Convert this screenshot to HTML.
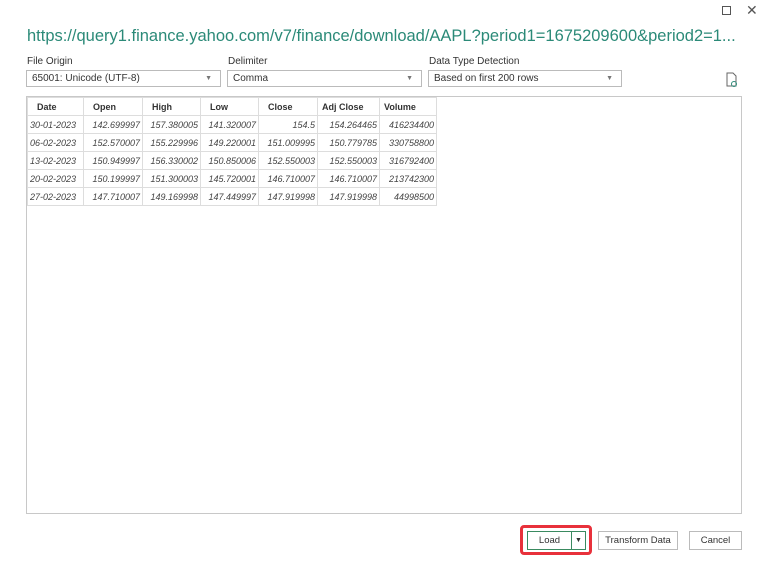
<!DOCTYPE html><html><head><style>
body{margin:0;width:768px;height:576px;background:#fff;font-family:"Liberation Sans",sans-serif;position:relative;overflow:hidden;color:#333}
.a{position:absolute}
.t{left:27px;top:26px;font-size:17px;color:#2b8a78;white-space:nowrap;transform:scaleX(0.97);transform-origin:left top}
.l{font-size:10px;color:#333}
.dd{border:1px solid #bbb;height:17px;font-size:10px;line-height:16px;padding-left:5px;box-sizing:border-box}
.dd span{position:absolute;right:8px;top:0;font-size:7px;color:#777}
.box{left:26px;top:96px;width:716px;height:418px;border:1px solid #c8c8c8;box-sizing:border-box}
table{position:absolute;left:27px;top:97px;border-collapse:collapse;font-size:9px;table-layout:fixed;width:409px}
td,th{border:1px solid #ddd;height:17px;padding:0 2px;white-space:nowrap;overflow:hidden;color:#444}
th{font-weight:bold;text-align:left;padding-left:9px;color:#333}
td{font-style:italic;text-align:right}
td:first-child{text-align:left}
.b{border:1px solid #bbb;height:19px;font-size:9.5px;line-height:17px;text-align:center;box-sizing:border-box}
</style></head><body>
<div class="a" style="left:722px;top:6px;width:9px;height:9px;border:1px solid #555;box-sizing:border-box"></div>
<div class="a" style="left:746px;top:2px;font-size:14px;color:#555">✕</div>
<div class="a t">https://query1.finance.yahoo.com/v7/finance/download/AAPL?period1=1675209600&amp;period2=1...</div>
<div class="a l" style="left:27px;top:56px">File Origin</div>
<div class="a l" style="left:228px;top:56px">Delimiter</div>
<div class="a l" style="left:429px;top:56px">Data Type Detection</div>
<div class="a dd" style="left:26px;top:70px;width:195px">65001: Unicode (UTF-8)<span>▼</span></div>
<div class="a dd" style="left:227px;top:70px;width:195px">Comma<span>▼</span></div>
<div class="a dd" style="left:428px;top:70px;width:194px">Based on first 200 rows<span>▼</span></div>
<svg class="a" style="left:726px;top:72px" width="12" height="16" viewBox="0 0 12 16"><path d="M1 1h6l3 3v10H1z" fill="none" stroke="#666"/><circle cx="8" cy="12" r="2.5" fill="none" stroke="#2b8a78"/></svg>
<div class="a box"></div>
<table>
<colgroup><col style="width:56px"><col style="width:59px"><col style="width:58px"><col style="width:58px"><col style="width:59px"><col style="width:62px"><col style="width:57px"></colgroup>
<tr><th>Date</th><th>Open</th><th>High</th><th>Low</th><th>Close</th><th style="padding-left:4px">Adj Close</th><th style="padding-left:4px">Volume</th></tr>
<tr><td>30-01-2023</td><td>142.699997</td><td>157.380005</td><td>141.320007</td><td>154.5</td><td>154.264465</td><td>416234400</td></tr>
<tr><td>06-02-2023</td><td>152.570007</td><td>155.229996</td><td>149.220001</td><td>151.009995</td><td>150.779785</td><td>330758800</td></tr>
<tr><td>13-02-2023</td><td>150.949997</td><td>156.330002</td><td>150.850006</td><td>152.550003</td><td>152.550003</td><td>316792400</td></tr>
<tr><td>20-02-2023</td><td>150.199997</td><td>151.300003</td><td>145.720001</td><td>146.710007</td><td>146.710007</td><td>213742300</td></tr>
<tr><td>27-02-2023</td><td>147.710007</td><td>149.169998</td><td>147.449997</td><td>147.919998</td><td>147.919998</td><td>44998500</td></tr>
</table>
<div class="a" style="left:520px;top:525px;width:72px;height:30px;border:3px solid #e8313b;border-radius:4px;box-sizing:border-box"></div>
<div class="a b" style="left:527px;top:531px;width:45px;border-color:#3a8a60">Load</div>
<div class="a b" style="left:571px;top:531px;width:15px;border-color:#3a8a60;font-size:7px">▼</div>
<div class="a b" style="left:598px;top:531px;width:80px">Transform Data</div>
<div class="a b" style="left:689px;top:531px;width:53px">Cancel</div>
</body></html>
